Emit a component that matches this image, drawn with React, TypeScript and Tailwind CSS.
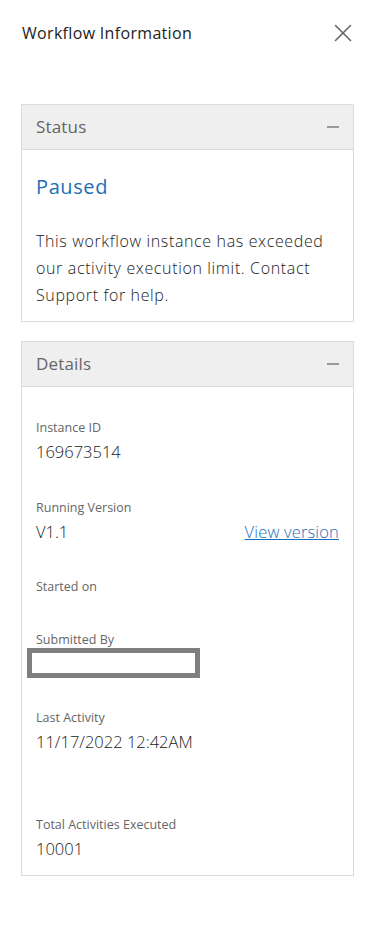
import { X } from "lucide-react";

type Field = { label: string; value?: string; link?: string; mb: string; redacted?: boolean };

const fields: Field[] = [
  { label: "Instance ID", value: "169673514", mb: "mb-[34px]" },
  { label: "Running Version", value: "V1.1", link: "View version", mb: "mb-[33px]" },
  { label: "Started on", mb: "mb-[33px]" },
  { label: "Submitted By", redacted: true, mb: "mb-[30px]" },
  { label: "Last Activity", value: "11/17/2022 12:42AM", mb: "mb-[61px]" },
  { label: "Total Activities Executed", value: "10001", mb: "mb-0" },
];

const CardHeader = ({ title }: { title: string }) => (
  <div className="flex items-center justify-between h-[45px] bg-[#efefef] border-b border-[#dcdcdc] pl-[14px] pr-[14px]">
    <span className="text-[17px] tracking-[0.01em] text-[#666]">{title}</span>
    <span className="block w-[12px] h-[2px] bg-[#999]" />
  </div>
);

const App = () => {
  return (
    <div className="bg-white min-h-screen w-[379px] font-['Open_Sans',sans-serif] text-[#222]">
      <div className="flex items-center justify-between pl-[22px] pr-[21px] pt-[21px] h-[44px]">
        <h1 className="text-[16px] leading-[22px] tracking-[0.02em] text-[#222]">Workflow Information</h1>
        <X size={30} strokeWidth={1.3} className="text-[#666]" />
      </div>

      <div className="ml-[21px] w-[333px] mt-[60px] border border-[#dcdcdc]">
        <CardHeader title="Status" />
        <div className="px-[14px] pt-[24px] pb-[12px]">
          <p className="text-[20px] leading-[26px] tracking-[0.03em] text-[#1b6fb8]">Paused</p>
          <p className="mt-[28px] text-[16px] leading-[27px] tracking-[0.04em] font-light text-[#222]">
            This workflow instance has exceeded our activity execution limit. Contact Support for help.
          </p>
        </div>
      </div>

      <div className="ml-[21px] w-[333px] mt-[19px] border border-[#dcdcdc]">
        <CardHeader title="Details" />
        <div className="px-[14px] pt-[31px] pb-[14px]">
          {fields.map((f) => (
            <div key={f.label} className={f.mb}>
              <div className="text-[12.5px] leading-[20px] text-[#666]">{f.label}</div>
              {f.value && (
                <div className="mt-[2px] flex items-center justify-between text-[16.5px] leading-[24px] font-light">
                  <span>{f.value}</span>
                  {f.link && (
                    <a href="#" className="text-[16.5px] tracking-[0.01em] text-[#1b6fb8] underline">
                      {f.link}
                    </a>
                  )}
                </div>
              )}
              {f.redacted && (
                <div className="-ml-[9px] -mt-[2px] w-[173px] h-[30px] border-[5px] border-[#7f7f7f]" />
              )}
            </div>
          ))}
        </div>
      </div>
    </div>
  );
};

export default App;
